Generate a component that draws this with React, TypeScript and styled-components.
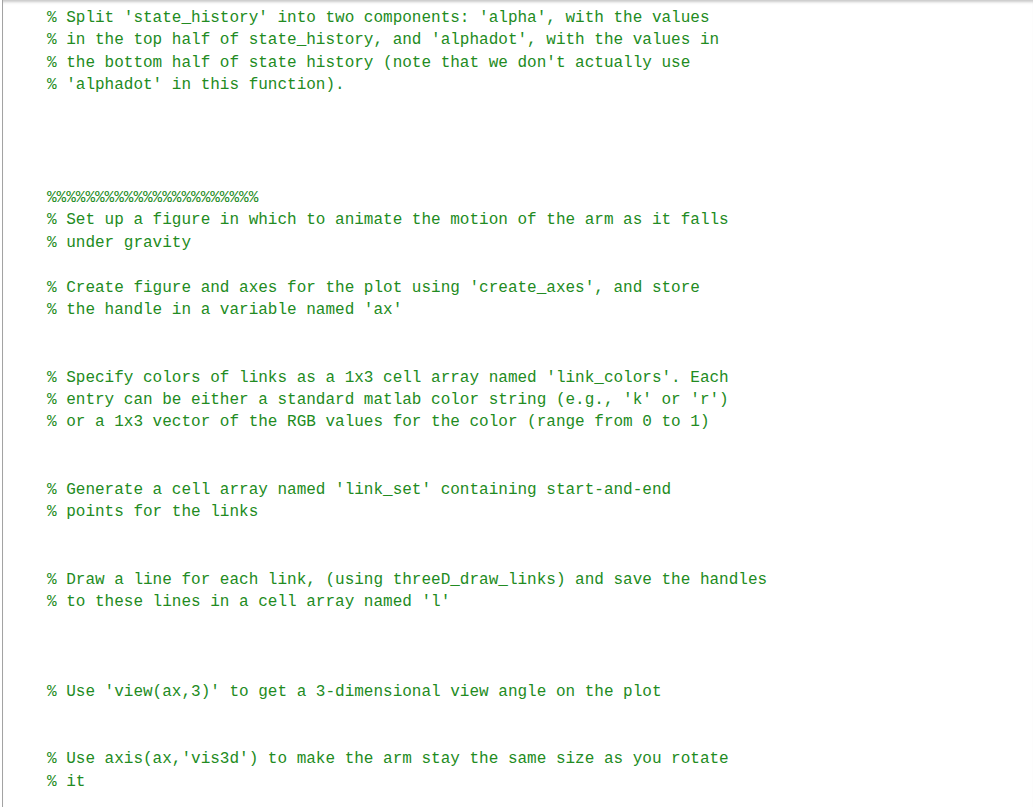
import React from "react";
import styled, { createGlobalStyle } from "styled-components";

const Global = createGlobalStyle`
  html, body {
    margin: 0;
    padding: 0;
    background: #ffffff;
  }
  #root {
    width: 1033px;
    height: 807px;
    overflow: hidden;
  }
`;

const Page = styled.div`
  width: 1033px;
  height: 807px;
  padding-left: 2px;
  box-sizing: border-box;
  background: #ffffff;
`;

const Editor = styled.div`
  height: 100%;
  border-left: 1px solid #a3a3a3;
  box-shadow: inset 0 4px 3px -2px rgba(0, 0, 0, 0.22);
  padding: 7px 0 0 44px;
  box-sizing: border-box;
  background: #ffffff;
`;

const Code = styled.div`
  display: flex;
  flex-direction: column;
  font-family: "Liberation Mono", "DejaVu Sans Mono", monospace;
  font-size: 16px;
  line-height: 22.47px;
  color: #228b22;
  white-space: pre;
`;

const Line = styled.div`
  height: 22.47px;
`;

const lines: string[] = [
  "% Split 'state_history' into two components: 'alpha', with the values",
  "% in the top half of state_history, and 'alphadot', with the values in",
  "% the bottom half of state history (note that we don't actually use",
  "% 'alphadot' in this function).",
  "",
  "",
  "",
  "",
  "%%%%%%%%%%%%%%%%%%%%%%",
  "% Set up a figure in which to animate the motion of the arm as it falls",
  "% under gravity",
  "",
  "% Create figure and axes for the plot using 'create_axes', and store",
  "% the handle in a variable named 'ax'",
  "",
  "",
  "% Specify colors of links as a 1x3 cell array named 'link_colors'. Each",
  "% entry can be either a standard matlab color string (e.g., 'k' or 'r')",
  "% or a 1x3 vector of the RGB values for the color (range from 0 to 1)",
  "",
  "",
  "% Generate a cell array named 'link_set' containing start-and-end",
  "% points for the links",
  "",
  "",
  "% Draw a line for each link, (using threeD_draw_links) and save the handles",
  "% to these lines in a cell array named 'l'",
  "",
  "",
  "",
  "% Use 'view(ax,3)' to get a 3-dimensional view angle on the plot",
  "",
  "",
  "% Use axis(ax,'vis3d') to make the arm stay the same size as you rotate",
  "% it",
];

export default function App() {
  return (
    <>
      <Global />
      <Page>
        <Editor>
          <Code>
            {lines.map((l, i) => (
              <Line key={i}>{l === "" ? "\u00a0" : l}</Line>
            ))}
          </Code>
        </Editor>
      </Page>
    </>
  );
}
